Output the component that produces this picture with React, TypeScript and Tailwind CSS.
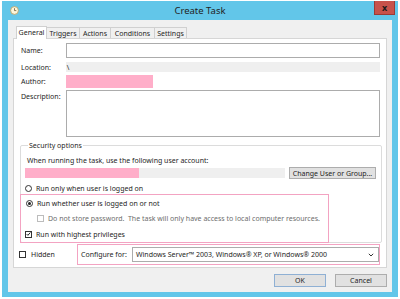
import React from 'react';

function Radio({ checked }: { checked?: boolean }) {
  return (
    <span className="w-[7px] h-[7px] rounded-full border border-[#333] bg-white flex items-center justify-center shrink-0">
      {checked && <span className="w-[3px] h-[3px] rounded-full bg-[#222]" />}
    </span>
  );
}

function Check({ checked, disabled }: { checked?: boolean; disabled?: boolean }) {
  return (
    <span
      className={`w-[7px] h-[7px] border bg-white flex items-center justify-center shrink-0 ${
        disabled ? 'border-[#bcbcbc]' : 'border-[#333]'
      }`}
    >
      {checked && (
        <svg width="6" height="6" viewBox="0 0 6 6">
          <path d="M0.8 3.1 L2.3 4.6 L5.2 1.2" fill="none" stroke="#222" strokeWidth="1.2" />
        </svg>
      )}
    </span>
  );
}

function ClockIcon() {
  return (
    <svg width="9" height="9" viewBox="0 0 9 9">
      <circle cx="4.5" cy="4.5" r="3.9" fill="#fdf6dc" stroke="#b59a5a" strokeWidth="0.8" />
      <path d="M4.5 2.2 V4.6 H6.3" fill="none" stroke="#6b5a35" strokeWidth="0.8" />
    </svg>
  );
}

const tabs = [
  { label: 'General', w: 'w-[31px]' },
  { label: 'Triggers', w: 'w-[33px]' },
  { label: 'Actions', w: 'w-[31px]' },
  { label: 'Conditions', w: 'w-[44px]' },
  { label: 'Settings', w: 'w-[32px]' },
];

export default function App() {
  return (
    <div className="w-[400px] h-[299px] bg-white overflow-hidden pt-px pl-[2px] font-['Noto_Sans',sans-serif] text-[7px] leading-none text-[#1e1e1e]">
      <div className="w-[396px] h-[296px] bg-[#62c6e9] flex flex-col">
        {/* title bar */}
        <div className="h-[19px] grid grid-cols-[1fr_auto_1fr] items-center">
          <div className="pl-[8px] flex items-center">
            <ClockIcon />
          </div>
          <div className="text-[9.5px] text-[#222] pt-px">Create Task</div>
          <div className="flex justify-end self-start pr-[3px]">
            <div className="w-[21px] h-[14px] bg-[#c7524b] border border-[#9b3a35] border-t-0 flex items-center justify-center text-[9px] font-bold text-[#1a1a1a]">
              x
            </div>
          </div>
        </div>

        {/* client */}
        <div className="mx-[6px] h-[272px] bg-[#f0f0f0] pt-[5px] px-[5px] flex flex-col">
          <div className="flex items-end h-[13px] pl-[3px]">
            {tabs.map((t, i) =>
              i === 0 ? (
                <div
                  key={t.label}
                  className={`${t.w} h-[13px] bg-white border border-b-0 border-[#d0d0d0] flex items-center justify-center relative z-10 -mb-px pb-px`}
                >
                  {t.label}
                </div>
              ) : (
                <div
                  key={t.label}
                  className={`${t.w} h-[11px] bg-[#f0f0f0] border border-b-0 border-l-0 border-[#d0d0d0] flex items-center justify-center`}
                >
                  {t.label}
                </div>
              )
            )}
          </div>

          <div className="h-[230px] bg-white border border-[#d6d6d6] px-[6px] flex flex-col">
            <div className="mt-[4px] h-[15px] flex items-center">
              <span className="w-[46px] pl-px">Name:</span>
              <div className="w-[316px] h-[15px] border border-[#acacac] bg-white" />
            </div>
            <div className="mt-[4px] h-[10px] flex items-center">
              <span className="w-[46px] pl-px">Location:</span>
              <div className="w-[316px] h-[10px] bg-[#efefef] pl-px flex items-center">\</div>
            </div>
            <div className="mt-[3px] h-[13px] flex items-center">
              <span className="w-[46px] pl-px">Author:</span>
              <div className="w-[87px] h-[13px] bg-[#ffaec9]" />
            </div>
            <div className="mt-[2px] h-[47px] flex items-start">
              <span className="w-[46px] pl-px pt-[3px]">Description:</span>
              <div className="w-[316px] h-[47px] border border-[#acacac] bg-white" />
            </div>

            <fieldset className="mt-[5px] w-[362px] border border-[#dcdcdc] rounded-[2px] pl-[4px] flex flex-col">
              <legend className="ml-[3px] px-px">Security options</legend>
              <div className="mt-[8px] ml-[2px]">When running the task, use the following user account:</div>
              <div className="mt-[3px] h-[12px] flex items-center">
                <div className="w-[260px] h-[10px] bg-[#efefef] flex">
                  <div className="w-[114px] h-[10px] bg-[#ffaec9]" />
                </div>
                <div className="ml-[4px] w-[87px] h-[12px] bg-[#e1e1e1] border border-[#adadad] flex items-center justify-center">
                  Change User or Group...
                </div>
              </div>
              <div className="mt-[5px] h-[8px] flex items-center gap-[4px]">
                <Radio />
                <span>Run only when user is logged on</span>
              </div>
              <div className="mt-[2px] -ml-[5px] -mb-px w-[309px] h-[49px] border border-[#f3a3c2] flex flex-col">
                <div className="mt-[4px] h-[8px] pl-[5px] flex items-center gap-[4px]">
                  <Radio checked />
                  <span>Run whether user is logged on or not</span>
                </div>
                <div className="mt-[7px] h-[8px] pl-[16px] flex items-center gap-[4px]">
                  <Check disabled />
                  <span className="text-[#6d6d6d]">
                    Do not store password.&nbsp; The task will only have access to local computer resources.
                  </span>
                </div>
                <div className="mt-[8px] h-[8px] pl-[4px] flex items-center gap-[4px]">
                  <Check checked />
                  <span>Run with highest privileges</span>
                </div>
              </div>
            </fieldset>

            <div className="mt-px flex items-center">
              <div className="w-[60px] -ml-px flex items-center gap-[5px]">
                <Check />
                <span>Hidden</span>
              </div>
              <div className="w-[306px] h-[21px] border border-[#f3a3c2] pl-[3px] flex items-center">
                <span className="w-[51px]">Configure for:</span>
                <div className="w-[247px] h-[15px] border border-[#acacac] bg-white pl-[3px] pr-[4px] flex items-center justify-between">
                  <span>Windows Server™ 2003, Windows® XP, or Windows® 2000</span>
                  <svg width="6" height="4" viewBox="0 0 6 4">
                    <path d="M0.8 0.8 L3 3 L5.2 0.8" fill="none" stroke="#333" strokeWidth="1" />
                  </svg>
                </div>
              </div>
            </div>
          </div>

          <div className="mt-[6px] flex justify-end gap-[9px]">
            <div className="w-[52px] h-[13px] bg-[#e1e1e1] border border-[#8fb0d4] flex items-center justify-center">OK</div>
            <div className="w-[52px] h-[13px] bg-[#e1e1e1] border border-[#adadad] flex items-center justify-center">Cancel</div>
          </div>
        </div>
      </div>
    </div>
  );
}
